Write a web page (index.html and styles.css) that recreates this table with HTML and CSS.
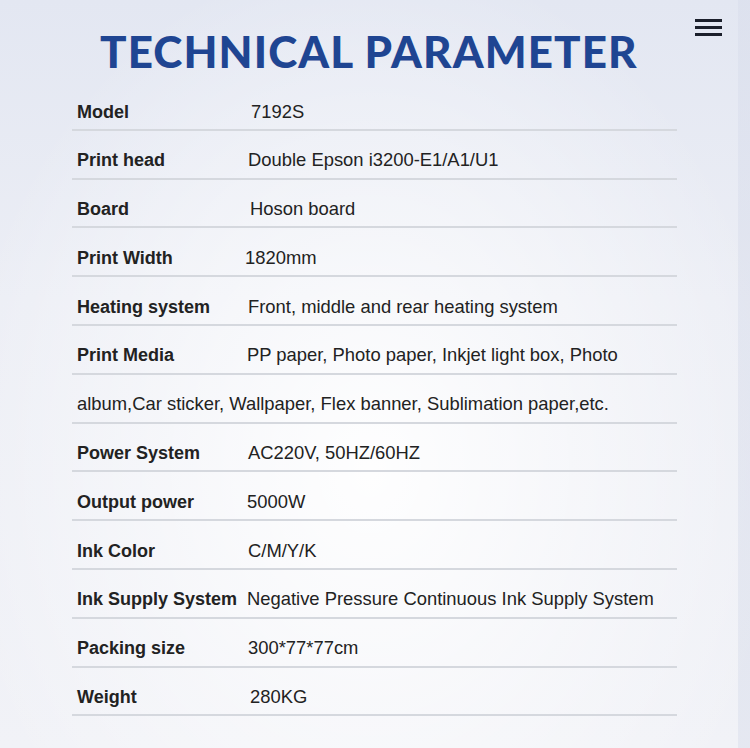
FILE: index.html
```html
<!DOCTYPE html>
<html lang="en">
<head>
<meta charset="utf-8">
<title>Technical Parameter</title>
<link rel="stylesheet" href="styles.css">
</head>
<body>
<div class="page">
  <header class="header">
    <h1 class="title">TECHNICAL PARAMETER</h1>
    <button class="menu" aria-label="Menu">
      <span class="menu-bar"></span>
      <span class="menu-bar"></span>
      <span class="menu-bar"></span>
    </button>
  </header>
  <section class="specs">
    <div class="row"><div class="label">Model</div><div class="value nudge-r3">7192S</div></div>
    <div class="row"><div class="label">Print head</div><div class="value">Double Epson i3200-E1/A1/U1</div></div>
    <div class="row"><div class="label">Board</div><div class="value nudge-r2">Hoson board</div></div>
    <div class="row"><div class="label">Print Width</div><div class="value nudge-l3">1820mm</div></div>
    <div class="row"><div class="label">Heating system</div><div class="value">Front, middle and rear heating system</div></div>
    <div class="row"><div class="label">Print Media</div><div class="value nudge-l1">PP paper, Photo paper, Inkjet light box, Photo</div></div>
    <div class="row row-full"><div class="value">album,Car sticker, Wallpaper, Flex banner, Sublimation paper,etc.</div></div>
    <div class="row"><div class="label">Power System</div><div class="value">AC220V, 50HZ/60HZ</div></div>
    <div class="row"><div class="label">Output power</div><div class="value nudge-l1">5000W</div></div>
    <div class="row"><div class="label">Ink Color</div><div class="value">C/M/Y/K</div></div>
    <div class="row"><div class="label">Ink Supply System</div><div class="value nudge-l1">Negative Pressure Continuous Ink Supply System</div></div>
    <div class="row"><div class="label">Packing size</div><div class="value">300*77*77cm</div></div>
    <div class="row"><div class="label">Weight</div><div class="value nudge-r2">280KG</div></div>
  </section>
</div>
</body>
</html>
```

FILE: styles.css
```css
* { box-sizing: border-box; }

html, body {
  margin: 0;
  padding: 0;
}

body {
  width: 750px;
  height: 748px;
  overflow: hidden;
  font-family: "Liberation Sans", Arial, sans-serif;
  color: #222;
  background:
    linear-gradient(90deg, rgba(0,0,0,0) 738px, rgba(214,219,234,0.45) 738px),
    radial-gradient(ellipse 420px 520px at 370px 470px, rgba(255,255,255,0.95), rgba(255,255,255,0) 100%),
    linear-gradient(180deg, #e3e7f2 0%, #eceef5 40%, #f1f2f7 100%);
}

.page {
  position: relative;
  width: 738px;
  height: 748px;
}

.header {
  height: 82px;
  padding-left: 100px;
  padding-top: 27px;
}

.title {
  margin: 0;
  font-family: "Lato", "Inter", sans-serif;
  font-weight: 900;
  font-size: 44px;
  line-height: 48px;
  letter-spacing: 1.1px;
  color: #1f4592;
}

.menu {
  position: absolute;
  top: 19px;
  left: 695px;
  width: 27px;
  height: 17px;
  padding: 0;
  border: 0;
  background: none;
  display: flex;
  flex-direction: column;
  justify-content: space-between;
}

.menu-bar {
  display: block;
  width: 27px;
  height: 3px;
  background: #1b1f2b;
}

.specs {
  margin-left: 72px;
  width: 605px;
}

.row {
  display: grid;
  grid-template-columns: 171px 1fr;
  align-items: start;
  height: 48.8px;
  padding: 18.5px 0 0 5px;
  border-bottom: 2px solid #d5d8de;
  font-size: 18px;
  line-height: 22px;
}

.row-full {
  grid-template-columns: 1fr;
}

.label {
  font-weight: 700;
  color: #222;
}

.value {
  color: #222;
  white-space: nowrap;
  font-size: 18.4px;
}

.nudge-r3 { margin-left: 3px; }
.nudge-r2 { margin-left: 2px; }
.nudge-l1 { margin-left: -1px; }
.nudge-l3 { margin-left: -3px; }
```
